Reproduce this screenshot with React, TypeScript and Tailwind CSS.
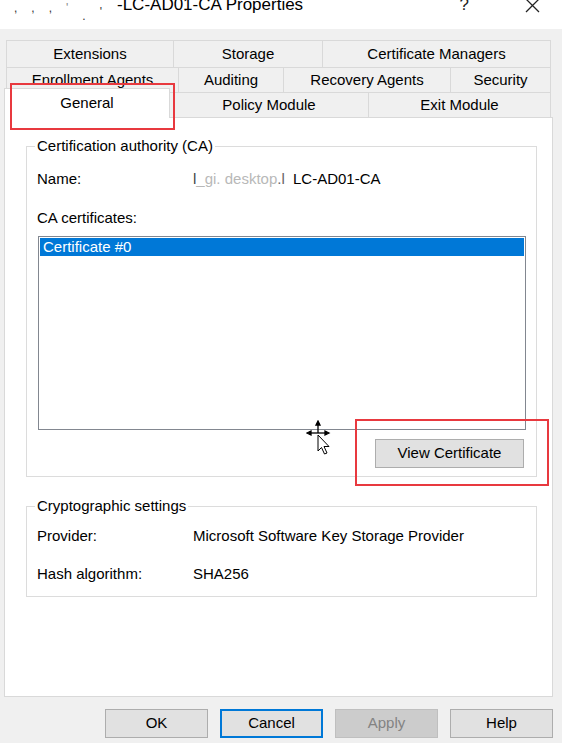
import React from "react";

function Tab({
  label,
  className,
}: {
  label: string;
  className: string;
}) {
  return (
    <div
      className={
        "h-full flex items-center justify-center bg-[#f0f0f0] border-[#d9d9d9] whitespace-nowrap " +
        className
      }
    >
      {label}
    </div>
  );
}

function WinButton({
  label,
  className,
}: {
  label: string;
  className: string;
}) {
  return (
    <div
      className={
        "h-[29px] flex items-center justify-center whitespace-nowrap " +
        className
      }
    >
      {label}
    </div>
  );
}

function Cursor() {
  return (
    <svg
      className="absolute left-[306px] top-[420px]"
      width="28"
      height="36"
      viewBox="0 0 28 36"
    >
      {/* move cross */}
      <g stroke="#000" strokeWidth="1.3" fill="#000">
        <line x1="12" y1="4" x2="12" y2="13" />
        <line x1="3" y1="13" x2="21" y2="13" />
        <polygon points="12,1 10,5 14,5" />
        <polygon points="1,13 5,11 5,15" />
        <polygon points="23,13 19,11 19,15" />
      </g>
      {/* arrow pointer */}
      <polygon
        points="12,15 12,31 15.5,27.5 18.5,34 21,33 18,26.5 23,26.5"
        fill="#fff"
        stroke="#000"
        strokeWidth="1"
        strokeLinejoin="round"
      />
    </svg>
  );
}

export default function App() {
  return (
    <div className="relative w-[562px] h-[743px] overflow-hidden bg-[#f0f0f0] text-[15px] text-black font-['Liberation_Sans',Arial,sans-serif]">
      {/* Title bar */}
      <div className="h-[29px] bg-white flex items-start overflow-hidden">
        <div className="w-[117px] h-full flex items-start text-[#333] text-[12px] leading-[12px] pl-[14px] gap-[14px] pt-[2px]">
          <span>,</span>
          <span>,</span>
          <span>,</span>
          <span className="text-[#888]">'</span>
          <span className="pt-[8px]">.</span>
          <span className="pt-[4px]">'</span>
        </div>
        <div className="flex-1 -mt-[5px] text-[17px] leading-[20px] whitespace-nowrap">
          -LC-AD01-CA Properties
        </div>
        <div className="-mt-[5px] text-[17px] leading-[20px] mr-[56px] text-[#222]">
          ?
        </div>
        <svg
          className="mr-[22px] -mt-[1px]"
          width="15"
          height="14"
          viewBox="0 0 15 14"
        >
          <path d="M1 0 L14 13 M14 0 L1 13" stroke="#222" strokeWidth="1.3" />
        </svg>
      </div>

      {/* Tab strip */}
      <div className="mt-[11px] ml-[6px] w-[545px] flex flex-col">
        <div className="h-[27px] flex">
          <Tab label="Extensions" className="w-[167px] border-t border-l" />
          <Tab label="Storage" className="w-[149px] border-t border-l" />
          <Tab
            label="Certificate Managers"
            className="w-[229px] border-t border-l border-r"
          />
        </div>
        <div className="h-[25px] flex">
          <Tab
            label="Enrollment Agents"
            className="w-[172px] border-t border-l"
          />
          <Tab label="Auditing" className="w-[105px] border-t border-l" />
          <Tab
            label="Recovery Agents"
            className="w-[167px] border-t border-l"
          />
          <Tab
            label="Security"
            className="w-[101px] border-t border-l border-r"
          />
        </div>
        <div className="h-[25px] flex items-start">
          <div className="relative z-10 -ml-[2px] -mt-[4px] w-[166px] h-[30px] bg-white border-t border-l border-r border-[#d9d9d9] flex items-center justify-center pb-[1px]">
            General
          </div>
          <Tab label="Policy Module" className="w-[198px] border-t" />
          <Tab
            label="Exit Module"
            className="w-[183px] border-t border-l border-r"
          />
        </div>
      </div>

      {/* Panel */}
      <div className="ml-[4px] w-[549px] h-[580px] bg-white border border-[#d9d9d9] flex flex-col">
        <fieldset className="ml-[21px] mt-[19px] w-[511px] border border-[#dcdcdc] pl-[10px] pr-[10px] pb-[8px]">
          <legend className="-ml-[2px] px-[2px] leading-[18px]">
            Certification authority (CA)
          </legend>
          <div className="mt-[15px] flex leading-[18px]">
            <div className="w-[156px]">Name:</div>
            <div className="flex whitespace-nowrap">
              <span className="w-[100px] overflow-hidden">
                <span className="text-[#444]">l</span>
                <span className="text-[#b8b8b8]">_gi. desktop</span>
                <span className="text-[#666]">.l</span>
              </span>
              <span>LC-AD01-CA</span>
            </div>
          </div>
          <div className="mt-[21px] leading-[18px]">CA certificates:</div>
          <div className="mt-[9px] ml-[1px] h-[194px] border border-[#828790] p-[1px] bg-white">
            <div className="h-[18px] bg-[#0078d7] text-white pl-[3px] leading-[18px]">
              Certificate #0
            </div>
          </div>
          <div className="mt-[9px] flex justify-end">
            <WinButton
              label="View Certificate"
              className="mr-[2px] w-[149px] bg-[#e1e1e1] border border-[#adadad]"
            />
          </div>
        </fieldset>

        <fieldset className="ml-[21px] mt-[20px] w-[511px] border border-[#dcdcdc] pl-[10px] pr-[10px] pb-[13px]">
          <legend className="-ml-[2px] px-[2px] leading-[18px]">
            Cryptographic settings
          </legend>
          <div className="mt-[12px] flex leading-[18px]">
            <div className="w-[156px]">Provider:</div>
            <div>Microsoft Software Key Storage Provider</div>
          </div>
          <div className="mt-[20px] flex leading-[18px]">
            <div className="w-[156px]">Hash algorithm:</div>
            <div>SHA256</div>
          </div>
        </fieldset>
      </div>

      {/* Bottom buttons */}
      <div className="mt-[12px] flex justify-end gap-[12px] pr-[9px]">
        <WinButton
          label="OK"
          className="w-[103px] bg-[#e1e1e1] border border-[#adadad]"
        />
        <WinButton
          label="Cancel"
          className="w-[103px] bg-[#e1e1e1] border-2 border-[#0078d7]"
        />
        <WinButton
          label="Apply"
          className="w-[103px] bg-[#cccccc] border border-[#bfbfbf] text-[#838383]"
        />
        <WinButton
          label="Help"
          className="w-[103px] bg-[#e1e1e1] border border-[#adadad]"
        />
      </div>

      {/* Annotation red boxes */}
      <div className="absolute left-[10px] top-[83px] w-[165px] h-[47px] border-2 border-[#e8393f] z-20" />
      <div className="absolute left-[355px] top-[419px] w-[194px] h-[67px] border-2 border-[#e8393f] z-20" />

      <Cursor />
    </div>
  );
}
